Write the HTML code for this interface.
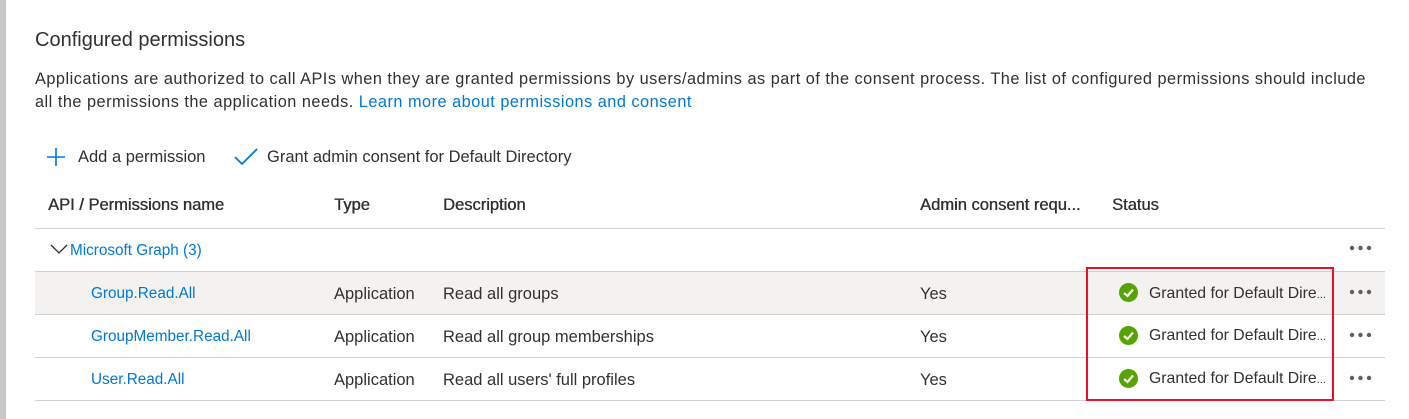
<!DOCTYPE html><html><head><style>
body{margin:0;width:1409px;height:419px;background:#fff;font-family:"Liberation Sans",sans-serif;color:#323130;position:relative;overflow:hidden}
.bar{position:absolute;left:0;top:0;width:6px;height:419px;background:#c8c8c8}
.a{position:absolute;white-space:nowrap}
.l{color:#0078d4}
.h{font-size:16.5px;color:#323130;text-shadow:0.4px 0 0 #323130}
.line{position:absolute;left:35px;width:1350px;height:1px;background:#d2d0ce}
.dots{position:absolute;left:1349px}
.ck{position:absolute;left:1119px;width:19px;height:19px;border-radius:50%;background:#57a300}
</style></head><body>
<div class="bar"></div>
<div class="a" style="left:35px;top:29px;font-size:20px">Configured permissions</div>
<div class="a" style="left:35px;top:68px;font-size:16.3px;line-height:23px;letter-spacing:0.5px">Applications are authorized to call APIs when they are granted permissions by users/admins as part of the consent process. The list of configured permissions should include<br>all the permissions the application needs. <span class="l">Learn more about permissions and consent</span></div>
<svg class="a" style="left:45px;top:146px" width="22" height="22"><path d="M11 2V20M2 11H20" stroke="#0078d4" stroke-width="1.6"/></svg>
<div class="a" style="left:78px;top:148px;font-size:16.5px">Add a permission</div>
<svg class="a" style="left:233px;top:147px" width="26" height="20"><path d="M2 10L9 17L24 2" stroke="#0078d4" stroke-width="1.8" fill="none"/></svg>
<div class="a" style="left:267px;top:148px;font-size:16.5px">Grant admin consent for Default Directory</div>
<div class="a h" style="left:48px;top:196px">API / Permissions name</div>
<div class="a h" style="left:334px;top:196px">Type</div>
<div class="a h" style="left:443px;top:196px">Description</div>
<div class="a h" style="left:920px;top:196px">Admin consent requ...</div>
<div class="a h" style="left:1112px;top:196px">Status</div>
<div class="line" style="top:228px"></div>
<svg class="a" style="left:50px;top:243px" width="18" height="12"><path d="M1 2L9 10L17 2" stroke="#323130" stroke-width="1.3" fill="none"/></svg>
<div class="a l" style="left:70px;top:242px;font-size:15.3px">Microsoft Graph (3)</div>
<div class="a" style="left:35px;top:271px;width:1350px;height:43px;background:#f3f2f1"></div>
<div class="line" style="top:271px"></div>
<div class="line" style="top:314px"></div>
<div class="line" style="top:357px"></div>
<div class="line" style="top:400px"></div>
<svg class="dots" style="top:245px" width="24" height="6"><circle cx="3" cy="3" r="2.2" fill="#605e5c"/><circle cx="11.5" cy="3" r="2.2" fill="#605e5c"/><circle cx="20" cy="3" r="2.2" fill="#605e5c"/></svg>
<svg class="dots" style="top:289px" width="24" height="6"><circle cx="3" cy="3" r="2.2" fill="#605e5c"/><circle cx="11.5" cy="3" r="2.2" fill="#605e5c"/><circle cx="20" cy="3" r="2.2" fill="#605e5c"/></svg>
<svg class="dots" style="top:332px" width="24" height="6"><circle cx="3" cy="3" r="2.2" fill="#605e5c"/><circle cx="11.5" cy="3" r="2.2" fill="#605e5c"/><circle cx="20" cy="3" r="2.2" fill="#605e5c"/></svg>
<svg class="dots" style="top:375px" width="24" height="6"><circle cx="3" cy="3" r="2.2" fill="#605e5c"/><circle cx="11.5" cy="3" r="2.2" fill="#605e5c"/><circle cx="20" cy="3" r="2.2" fill="#605e5c"/></svg>
<div class="a l" style="left:91px;top:285px;font-size:15.3px">Group.Read.All</div>
<div class="a l" style="left:91px;top:328px;font-size:15.3px">GroupMember.Read.All</div>
<div class="a l" style="left:91px;top:371px;font-size:15.3px">User.Read.All</div>
<div class="a" style="left:334px;top:285px;font-size:16.5px">Application</div>
<div class="a" style="left:334px;top:328px;font-size:16.5px">Application</div>
<div class="a" style="left:334px;top:371px;font-size:16.5px">Application</div>
<div class="a" style="left:443px;top:285px;font-size:16.5px">Read all groups</div>
<div class="a" style="left:443px;top:328px;font-size:16.5px">Read all group memberships</div>
<div class="a" style="left:443px;top:371px;font-size:16.5px">Read all users' full profiles</div>
<div class="a" style="left:920px;top:285px;font-size:16.5px">Yes</div>
<div class="a" style="left:920px;top:328px;font-size:16.5px">Yes</div>
<div class="a" style="left:920px;top:371px;font-size:16.5px">Yes</div>
<div class="ck" style="top:283px"><svg width="19" height="19"><path d="M5 10L8.5 13L14 6.5" stroke="#fff" stroke-width="2.2" fill="none"/></svg></div>
<div class="ck" style="top:326px"><svg width="19" height="19"><path d="M5 10L8.5 13L14 6.5" stroke="#fff" stroke-width="2.2" fill="none"/></svg></div>
<div class="ck" style="top:369px"><svg width="19" height="19"><path d="M5 10L8.5 13L14 6.5" stroke="#fff" stroke-width="2.2" fill="none"/></svg></div>
<div class="a" style="left:1149px;top:285px;font-size:15.8px;width:183px;overflow:hidden">Granted for Default Dire<span style="font-size:11px">...</span></div>
<div class="a" style="left:1149px;top:327px;font-size:15.8px;width:183px;overflow:hidden">Granted for Default Dire<span style="font-size:11px">...</span></div>
<div class="a" style="left:1149px;top:370px;font-size:15.8px;width:183px;overflow:hidden">Granted for Default Dire<span style="font-size:11px">...</span></div>
<div class="a" style="left:1086px;top:267px;width:244px;height:130px;border:2px solid #e81123"></div>
</body></html>
